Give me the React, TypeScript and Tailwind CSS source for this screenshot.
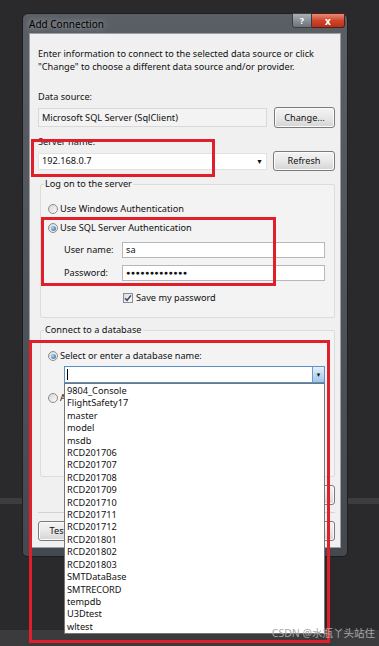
import React from "react";

const databases = [
  "9804_Console",
  "FlightSafety17",
  "master",
  "model",
  "msdb",
  "RCD201706",
  "RCD201707",
  "RCD201708",
  "RCD201709",
  "RCD201710",
  "RCD201711",
  "RCD201712",
  "RCD201801",
  "RCD201802",
  "RCD201803",
  "SMTDataBase",
  "SMTRECORD",
  "tempdb",
  "U3Dtest",
  "wltest",
];

function Radio({ checked }: { checked?: boolean }) {
  return (
    <span className="flex h-[10px] w-[10px] shrink-0 items-center justify-center rounded-full border border-[#8c8c8c] bg-gradient-to-br from-[#d6d6d6] to-[#fbfbfb]">
      {checked && (
        <span className="h-[5px] w-[5px] rounded-full bg-[radial-gradient(circle_at_35%_35%,#a9d6f7,#1f5f95)]" />
      )}
    </span>
  );
}

function Button({ label, className = "" }: { label?: string; className?: string }) {
  return (
    <div
      className={`flex items-center justify-center rounded-[3px] border border-[#7b7b7b] bg-gradient-to-b from-[#f4f4f4] via-[#e8e8e8] to-[#d4d4d4] shadow-[inset_0_0_0_1px_#fbfbfb] ${className}`}
    >
      {label}
    </div>
  );
}

function TextBox({ value, className = "" }: { value?: string; className?: string }) {
  return (
    <div className={`flex items-center border border-[#b5b8bd] bg-white pl-[3px] ${className}`}>
      {value}
    </div>
  );
}

export default function App() {
  return (
    <div className="relative h-[646px] w-[379px] overflow-hidden bg-[#2a2a2c] font-['Noto_Sans',sans-serif] text-[9.2px] text-[#111]">
      {/* desktop behind the dialog */}
      <div className="absolute left-0 top-[498px] h-[6px] w-full bg-[#3d3d40]" />
      <div className="absolute left-0 top-[630px] h-[16px] w-full bg-[#3b3b3d]" />

      {/* dialog window */}
      <div className="absolute left-[22px] top-[13px] flex h-[544px] w-[326px] flex-col rounded-t-[6px] rounded-b-[5px] border border-[#1c1e21] bg-gradient-to-b from-[#5a5f65] to-[#44494f] px-[6px] pb-[8px]">
        {/* title bar */}
        <div className="flex h-[19px] items-start">
          <span className="mt-[4px] text-[10px] leading-[12px] text-black [text-shadow:0_0_6px_rgba(255,255,255,0.7)]">
            Add Connection
          </span>
          <div className="-mr-[4px] -mt-[1px] ml-auto flex">
            <div className="flex h-[15px] w-[20px] items-center justify-center rounded-bl-[3px] border border-[#3a3e43] bg-gradient-to-b from-[#aab0b6] to-[#6c7278] text-[9px] font-bold leading-none text-white">
              ?
            </div>
            <div className="flex h-[15px] w-[33px] items-center justify-center rounded-br-[3px] border border-l-0 border-[#5a1c12] bg-gradient-to-b from-[#e68a76] via-[#cf4529] to-[#b8321a] text-[10px] font-bold leading-none text-white">
              x
            </div>
          </div>
        </div>

        {/* client area */}
        <div className="flex h-[515px] flex-col border border-[#9aa0a6] bg-[#f0f0f0] pl-[8px] pr-[5px] pt-[13px]">
          <p className="leading-[13px]">
            Enter information to connect to the selected data source or click
            <br />
            "Change" to choose a different data source and/or provider.
          </p>

          <div className="mt-[18px] leading-[12px]">Data source:</div>
          <div className="mt-[4px] flex h-[21px] items-center">
            <div className="flex h-[19px] w-[229px] items-center border border-[#d9d9d9] bg-[#f3f3f3] pl-[3px]">
              Microsoft SQL Server (SqlClient)
            </div>
            <Button label="Change..." className="ml-auto h-[21px] w-[61px]" />
          </div>

          <div className="mt-[8px] leading-[12px]">Server name:</div>
          <div className="mt-[3px] flex h-[20px] items-center">
            <div className="flex h-[17px] w-[229px] items-center justify-between border border-[#e2e2e2] bg-white pl-[3px] pr-[3px]">
              <span>192.168.0.7</span>
              <span className="text-[7px] leading-none">▼</span>
            </div>
            <Button label="Refresh" className="ml-auto h-[20px] w-[62px]" />
          </div>

          {/* log on group */}
          <fieldset className="ml-[2px] mt-[7px] rounded-[2px] border border-[#dcdcdc] bg-[#f3f3f3] pb-[13px] pl-[7px] pr-[9px]">
            <legend className="-ml-[4px] px-[1px] leading-[12px]">Log on to the server</legend>
            <div className="mt-[13px] flex h-[12px] items-center gap-[2px]">
              <Radio />
              <span>Use Windows Authentication</span>
            </div>
            <div className="mt-[7px] flex h-[12px] items-center gap-[2px]">
              <Radio checked />
              <span>Use SQL Server Authentication</span>
            </div>
            <div className="ml-[16px] mt-[8px] flex h-[16px] items-center">
              <span className="w-[58px]">User name:</span>
              <TextBox value="sa" className="h-[16px] flex-1" />
            </div>
            <div className="ml-[16px] mt-[7px] flex h-[16px] items-center">
              <span className="w-[58px]">Password:</span>
              <TextBox className="h-[16px] flex-1 text-[7px] tracking-[0.5px]" value="●●●●●●●●●●●●●" />
            </div>
            <div className="ml-[75px] mt-[11px] flex h-[12px] items-center gap-[3px]">
              <span className="flex h-[10px] w-[10px] items-center justify-center border border-[#8c8c8c] bg-gradient-to-br from-[#dedede] to-[#fbfbfb]">
                <svg width="8" height="8" viewBox="0 0 8 8">
                  <path d="M1 4.2 L3.1 6.3 L7 1.4" fill="none" stroke="#2c4a6e" strokeWidth="1.5" />
                </svg>
              </span>
              <span>Save my password</span>
            </div>
          </fieldset>

          {/* database group */}
          <fieldset className="ml-[2px] mt-[6px] rounded-[2px] border border-[#dcdcdc] bg-[#f3f3f3] pb-[10px] pl-[7px] pr-[9px]">
            <legend className="-ml-[4px] px-[1px] leading-[12px]">Connect to a database</legend>
            <div className="mt-[14px] flex h-[12px] items-center gap-[2px]">
              <Radio checked />
              <span>Select or enter a database name:</span>
            </div>
            <div className="ml-[16px] mt-[4px] flex h-[17px] items-stretch border border-[#5b8fc7] bg-white">
              <span className="ml-[2px] mt-[2px] h-[11px] w-px bg-black" />
              <div className="ml-auto flex w-[12px] items-center justify-center border-l border-[#6f9ccc] bg-gradient-to-b from-[#e3f1fc] to-[#9fc7ea] text-[6px] leading-none">
                ▼
              </div>
            </div>
            <div className="mt-[9px] flex h-[12px] items-center gap-[2px]">
              <Radio />
              <span>Attach a database file:</span>
            </div>
            {/* rows covered by the open list */}
            <div className="ml-[16px] mt-[6px] flex h-[17px] items-center gap-[6px]">
              <TextBox className="h-[17px] w-[180px]" />
              <Button className="h-[17px] w-[60px]" />
            </div>
            <div className="ml-[16px] mt-[6px] h-[12px]" />
            <TextBox className="ml-[16px] mt-[4px] h-[17px] w-[200px]" />
          </fieldset>

          <Button className="mt-[8px] h-[20px] w-[75px] self-end" />
          <div className="mt-[7px] h-px bg-[#d3d3d3]" />
          <div className="mt-[8px] flex h-[20px] items-center gap-[8px]">
            <Button label="Test Connection" className="h-[20px] w-[92px]" />
            <Button className="ml-auto h-[20px] w-[62px]" />
            <Button className="h-[20px] w-[62px]" />
          </div>
        </div>
      </div>

      {/* open drop-down list */}
      <div className="absolute left-[64px] top-[383px] h-[251px] w-[261px] border border-[#767676] bg-white pt-[1px]">
        {databases.map((name) => (
          <div key={name} className="pl-[2px] leading-[12.4px]">
            {name}
          </div>
        ))}
      </div>

      {/* red annotation boxes */}
      <div className="absolute left-[31px] top-[139px] h-[38px] w-[184px] border-[3px] border-[#e11f2a]" />
      <div className="absolute left-[41px] top-[217px] h-[69px] w-[235px] border-[3px] border-[#e11f2a]" />
      <div className="absolute left-[29px] top-[340px] h-[303px] w-[301px] border-[3px] border-[#e11f2a]" />

      <div className="absolute right-[4px] top-[626px] font-['Noto_Sans','Noto_Sans_CJK_SC',sans-serif] text-[10.5px] leading-[14px] text-[#a8a8a8]">
        CSDN @水瓶丫头站住
      </div>
    </div>
  );
}
